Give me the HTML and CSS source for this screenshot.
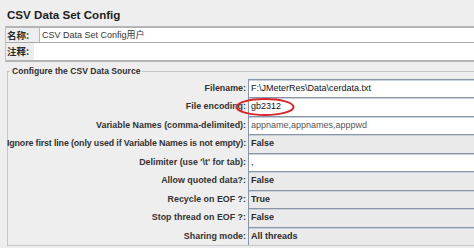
FILE: index.html
```html
<!DOCTYPE html>
<html lang="zh">
<head>
    <meta charset="UTF-8">
    <title>CSV Data Set Config</title>
    <link rel="stylesheet" href="styles.css">
</head>
<body>
    <div class="page">
        <div class="panel-title">CSV Data Set Config</div>

        <div class="name-panel">
            <div class="name-row">
                <span class="name-label">名称:</span>
                <div class="name-input">CSV Data Set Config用户</div>
            </div>
            <div class="name-row comment">
                <span class="name-label">注释:</span>
                <div class="name-input"></div>
            </div>
        </div>

        <fieldset class="source-box">
            <legend>Configure the CSV Data Source</legend>
            <div class="form-grid">
                <label class="field-label"><span>Filename:</span></label>
                <div class="field text">F:\JMeterRes\Data\cerdata.txt</div>

                <label class="field-label"><span>File encoding:</span></label>
                <div class="field text">gb2312</div>

                <label class="field-label"><span>Variable Names (comma-delimited):</span></label>
                <div class="field text muted">appname,appnames,apppwd</div>

                <label class="field-label long"><span>Ignore first line (only used if Variable Names is not empty):</span></label>
                <div class="field combo">False</div>

                <label class="field-label"><span>Delimiter (use '\t' for tab):</span></label>
                <div class="field text">,</div>

                <label class="field-label"><span>Allow quoted data?:</span></label>
                <div class="field combo">False</div>

                <label class="field-label"><span>Recycle on EOF ?:</span></label>
                <div class="field combo">True</div>

                <label class="field-label"><span>Stop thread on EOF ?:</span></label>
                <div class="field combo">False</div>

                <label class="field-label"><span>Sharing mode:</span></label>
                <div class="field combo">All threads</div>
            </div>
        </fieldset>

        <!-- red marker drawn over the encoding field -->
        <svg class="highlight" width="62" height="20" viewBox="0 0 62 20">
            <ellipse cx="31" cy="10" rx="28.5" ry="8" fill="none" stroke="#d8262b" stroke-width="2"/>
        </svg>
    </div>
</body>
</html>
```

FILE: styles.css
```css
:root {
    --bg: #eeeeee;
    --text-dark: #222222;
    --label-color: #333333;
    --field-border: #8796a8;
    --field-border-light: #c8d0da;
    --combo-bg: #eaeaea;
}

* {
    box-sizing: border-box;
}

body {
    margin: 0;
    background-color: var(--bg);
    font-family: 'Liberation Sans', Arial, 'Noto Sans CJK SC', sans-serif;
    color: var(--text-dark);
    overflow: hidden;
}

.page {
    position: relative;
    width: 474px;
    height: 248px;
    overflow: hidden;
}

.panel-title {
    height: 26px;
    padding: 8px 0 0 7px;
    font-size: 11.6px;
    font-weight: bold;
    line-height: 13px;
    color: #1e1e1e;
}

/* name / comment block */
.name-panel {
    margin-left: 5px;
    border-top: 2px solid #b4b4b4;
    border-left: 1px solid #c2c2c2;
    border-bottom: 2px solid #b4b4b4;
}

.name-row {
    display: flex;
    height: 15px;
    border-bottom: 1px solid #a9a9a9;
}

.name-row.comment {
    height: 17px;
    border-bottom: none;
}

.name-label {
    width: 33px;
    padding-left: 1px;
    font-family: 'Noto Sans CJK SC', sans-serif;
    font-size: 9.5px;
    font-weight: bold;
    line-height: 15px;
    color: #2a2a2a;
}

.comment .name-label {
    width: 28px;
    line-height: 17px;
}

.name-input {
    flex: 1;
    background-color: #ffffff;
    border-left: 1px solid #b9b9b9;
    padding-left: 2px;
    font-size: 9px;
    line-height: 15px;
    color: #333333;
}

.comment .name-input {
    border-left: none;
}

/* data source group */
.source-box {
    margin: 4px -30px 0 7px;
    padding: 3px 0 0 0;
    border: 1px solid #c6c6c6;
    border-right: none;
    min-width: 0;
}

.source-box legend {
    margin-left: 2px;
    padding: 0 2px;
    font-size: 8.6px;
    font-weight: bold;
    line-height: 10px;
    color: #2e2e2e;
}

.form-grid {
    display: grid;
    grid-template-columns: 238px 1fr;
    grid-auto-rows: 18.45px;
    column-gap: 2px;
}

.field-label {
    display: flex;
    justify-content: flex-end;
    font-size: 8.9px;
    font-weight: bold;
    color: var(--label-color);
    line-height: 18px;
    white-space: nowrap;
}

.field-label.long {
    letter-spacing: -0.14px;
}

.field-label span {
    flex-shrink: 0;
}

.field {
    border-top: 1px solid var(--field-border);
    border-left: 1px solid var(--field-border);
    box-shadow: inset 0 1px 0 var(--field-border-light);
    padding-left: 2px;
    font-size: 9px;
    line-height: 17px;
    white-space: nowrap;
}

.field.text {
    background-color: #ffffff;
    color: #111111;
}

.field.muted {
    color: #555555;
}

.field.combo {
    background-color: var(--combo-bg);
    font-weight: bold;
    color: #2a2a2a;
}

.highlight {
    position: absolute;
    left: 234px;
    top: 97px;
}
```
